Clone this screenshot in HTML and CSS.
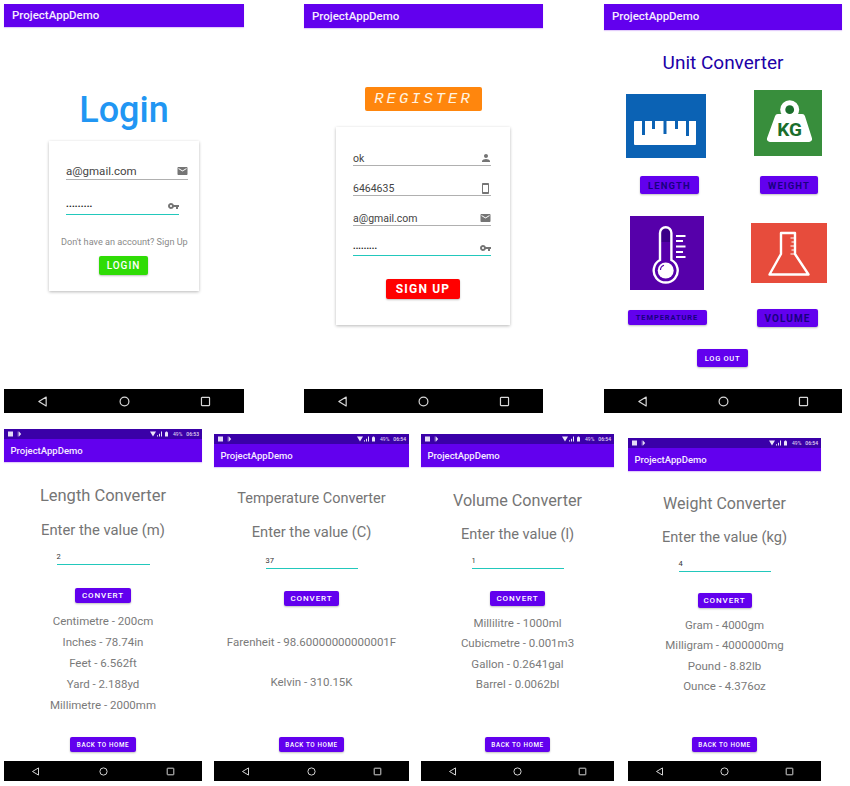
FILE: index.html
```html
<!DOCTYPE html>
<html lang="en">
<head>
    <meta charset="UTF-8">
    <meta name="viewport" content="width=device-width, initial-scale=1.0">
    <title>ProjectAppDemo screens</title>
    <link rel="stylesheet" href="styles.css">
</head>
<body>
    <svg class="sprite" aria-hidden="true">
        <symbol id="i-mail" viewBox="2 4 20 16"><path d="M20 4H4c-1.1 0-2 .9-2 2v12c0 1.1.9 2 2 2h16c1.1 0 2-.9 2-2V6c0-1.1-.9-2-2-2zm0 4l-8 5-8-5V6l8 5 8-5v2z"/></symbol>
        <symbol id="i-key" viewBox="1 6 22 12"><path d="M12.65 10C11.83 7.67 9.61 6 7 6c-3.31 0-6 2.69-6 6s2.69 6 6 6c2.61 0 4.83-1.67 5.65-4H17v4h4v-4h2v-4H12.65zM7 14c-1.1 0-2-.9-2-2s.9-2 2-2 2 .9 2 2-.9 2-2 2z"/></symbol>
        <symbol id="i-person" viewBox="4 4 16 16"><path d="M12 12c2.21 0 4-1.79 4-4s-1.79-4-4-4-4 1.79-4 4 1.79 4 4 4zm0 2c-2.67 0-8 1.34-8 4v2h16v-2c0-2.66-5.33-4-8-4z"/></symbol>
        <symbol id="i-phone" viewBox="5 1 14 22"><path d="M17 1.01L7 1c-1.1 0-2 .9-2 2v18c0 1.1.9 2 2 2h10c1.1 0 2-.9 2-2V3c0-1.1-.9-1.99-2-1.99zM17 19H7V5h10v14z"/></symbol>
        <symbol id="i-back" viewBox="0 0 12 12"><path d="M10 1.2v9.6L2 6z" fill="none" stroke="currentColor" stroke-width="1.3" stroke-linejoin="round"/></symbol>
        <symbol id="i-home" viewBox="0 0 12 12"><circle cx="6" cy="6" r="4.8" fill="none" stroke="currentColor" stroke-width="1.3"/></symbol>
        <symbol id="i-recent" viewBox="0 0 12 12"><rect x="1.6" y="1.6" width="8.8" height="8.8" rx="0.6" fill="none" stroke="currentColor" stroke-width="1.3"/></symbol>
        <symbol id="i-status-left" viewBox="0 0 16 6"><path d="M0 .5h5v5H0zM11 .5v5l2.2-2.5zM9.8.5h.7v5h-.7z"/></symbol>
        <symbol id="i-status-right" viewBox="0 0 20 6"><path d="M0 .5h6L3 5.500zM7 5.500h1V4.200H7zM9 5.500h1V2.800H9zM11 5.500h1V.5h-1zM15 1.200h.8V.5h1.400v.7h.8v4.300h-3z"/></symbol>
    </svg>

    <div class="row row-top">
        <!-- Login -->
        <div class="phone phone-login">
            <div class="app-bar">ProjectAppDemo</div>
            <div class="body body-center">
                <h1 class="login-title">Login</h1>
                <div class="card card-login">
                    <div class="field field-long">
                        <span>a@gmail.com</span>
                        <svg class="ic ic-mail"><use href="#i-mail"></use></svg>
                    </div>
                    <div class="field field-focus field-pass">
                        <span class="dots">•••••••••</span>
                        <svg class="ic ic-key"><use href="#i-key"></use></svg>
                    </div>
                    <p class="login-hint">Don't have an account? Sign Up</p>
                    <button class="btn btn-login">LOGIN</button>
                </div>
            </div>
            <div class="nav nav-large">
                <svg class="nav-ic"><use href="#i-back"></use></svg>
                <svg class="nav-ic"><use href="#i-home"></use></svg>
                <svg class="nav-ic"><use href="#i-recent"></use></svg>
            </div>
        </div>

        <!-- Register -->
        <div class="phone phone-register">
            <div class="app-bar app-bar-24">ProjectAppDemo</div>
            <div class="body body-center">
                <div class="register-badge">REGISTER</div>
                <div class="card card-register">
                    <div class="field">
                        <span>ok</span>
                        <svg class="ic ic-person"><use href="#i-person"></use></svg>
                    </div>
                    <div class="field">
                        <span>6464635</span>
                        <svg class="ic ic-phone"><use href="#i-phone"></use></svg>
                    </div>
                    <div class="field">
                        <span>a@gmail.com</span>
                        <svg class="ic ic-mail"><use href="#i-mail"></use></svg>
                    </div>
                    <div class="field field-focus">
                        <span class="dots dots-small">•••••••••</span>
                        <svg class="ic ic-key"><use href="#i-key"></use></svg>
                    </div>
                    <button class="btn btn-signup">SIGN UP</button>
                </div>
            </div>
            <div class="nav nav-large">
                <svg class="nav-ic"><use href="#i-back"></use></svg>
                <svg class="nav-ic"><use href="#i-home"></use></svg>
                <svg class="nav-ic"><use href="#i-recent"></use></svg>
            </div>
        </div>

        <!-- Home -->
        <div class="phone phone-home">
            <div class="app-bar app-bar-home">ProjectAppDemo</div>
            <div class="body body-center">
                <h2 class="home-title">Unit Converter</h2>
                <div class="tiles">
                    <div class="tile">
                        <div class="tile-art tile-art-top tile-end">
                            <svg class="art-length" viewBox="0 0 80 64">
                                <rect width="80" height="64" fill="#0b62b4"/>
                                <path d="M9 27h61v23a1 1 0 0 1-1 1H9a1 1 0 0 1-1-1V28a1 1 0 0 1 1-1z" fill="#fff"/>
                                <path d="M16 27h3v14h-3zM26 27h3v8h-3zM37.500 27h3v13h-3zM49 27h3v8h-3zM60 27h3v15h-3z" fill="#0b62b4"/>
                            </svg>
                        </div>
                        <button class="btn btn-unit btn-length">LENGTH</button>
                    </div>
                    <div class="tile">
                        <div class="tile-art tile-art-top tile-start">
                            <svg class="art-weight" viewBox="0 0 68 66">
                                <rect width="68" height="66" fill="#388e3c"/>
                                <circle cx="35.700" cy="19.700" r="9.500" fill="#fff"/>
                                <path d="M24 24h24a3 3 0 0 1 3 2.200l7 22a3 3 0 0 1-3 3.800H16a3 3 0 0 1-3-3.800l8-22a3 3 0 0 1 3-2.200z" fill="#fff"/>
                                <circle cx="35.700" cy="19.700" r="4.400" fill="#1b6e2c"/>
                                <text class="kg" x="35.700" y="46" text-anchor="middle">KG</text>
                            </svg>
                        </div>
                        <button class="btn btn-unit btn-weight">WEIGHT</button>
                    </div>
                    <div class="tile">
                        <div class="tile-art tile-art-bottom">
                            <svg class="art-temp" viewBox="0 0 74 74">
                                <rect width="74" height="74" fill="#5600aa"/>
                                <path d="M31 16v10h9.500V16a4.750 4.750 0 0 0-9.500 0z" fill="#3b0088"/>
                                <path d="M30 44V17a5.700 5.700 0 0 1 11.400 0v27a12 12 0 1 1-11.400 0z" fill="none" stroke="#fff" stroke-width="2.400"/>
                                <circle cx="35.700" cy="54.500" r="8" fill="#fff"/>
                                <path d="M30.500 54a5 5 0 0 1 3.500-4.800" fill="none" stroke="#5600aa" stroke-width="1.200"/>
                                <path d="M46 20h9.500M46 25h7M46 30.500h9.500M46 36h7M46 41h9.500" stroke="#fff" stroke-width="2"/>
                            </svg>
                        </div>
                        <button class="btn btn-unit btn-temp">TEMPERATURE</button>
                    </div>
                    <div class="tile">
                        <div class="tile-art tile-art-bottom">
                            <svg class="art-volume" viewBox="0 0 76 60">
                                <rect width="76" height="60" fill="#e74c3c"/>
                                <path d="M30 10h14v21l13.500 20.500h-39L30 31z" fill="none" stroke="#fff" stroke-width="2.400" stroke-linejoin="round"/>
                                <path d="M39.500 15h4.500M40.500 19h3.500M39.500 23h4.500M40.500 27h3.500M39.500 31h4.500" stroke="#fff" stroke-width="1"/>
                            </svg>
                        </div>
                        <button class="btn btn-unit btn-volume">VOLUME</button>
                    </div>
                </div>
                <button class="btn btn-logout">LOG OUT</button>
            </div>
            <div class="nav nav-large">
                <svg class="nav-ic"><use href="#i-back"></use></svg>
                <svg class="nav-ic"><use href="#i-home"></use></svg>
                <svg class="nav-ic"><use href="#i-recent"></use></svg>
            </div>
        </div>
    </div>

    <div class="row row-bottom">
        <!-- Length -->
        <div class="phone conv conv-length">
            <div class="status">
                <svg class="status-left"><use href="#i-status-left"></use></svg>
                <svg class="status-right"><use href="#i-status-right"></use></svg>
                <span class="status-text">49%</span>
                <span class="status-text status-time">06:53</span>
            </div>
            <div class="app-bar app-bar-small">ProjectAppDemo</div>
            <div class="body body-center">
                <h2 class="conv-title">Length Converter</h2>
                <div class="conv-label">Enter the value (m)</div>
                <div class="conv-input">2</div>
                <button class="btn btn-convert">CONVERT</button>
                <div class="results">
                    <p>Centimetre - 200cm</p>
                    <p>Inches - 78.74in</p>
                    <p>Feet - 6.562ft</p>
                    <p>Yard - 2.188yd</p>
                    <p>Millimetre - 2000mm</p>
                </div>
                <button class="btn btn-back">BACK TO HOME</button>
            </div>
            <div class="nav">
                <svg class="nav-ic"><use href="#i-back"></use></svg>
                <svg class="nav-ic"><use href="#i-home"></use></svg>
                <svg class="nav-ic"><use href="#i-recent"></use></svg>
            </div>
        </div>

        <!-- Temperature -->
        <div class="phone conv conv-temp">
            <div class="status">
                <svg class="status-left"><use href="#i-status-left"></use></svg>
                <svg class="status-right"><use href="#i-status-right"></use></svg>
                <span class="status-text">49%</span>
                <span class="status-text status-time">06:54</span>
            </div>
            <div class="app-bar app-bar-small">ProjectAppDemo</div>
            <div class="body body-center">
                <h2 class="conv-title">Temperature Converter</h2>
                <div class="conv-label">Enter the value (C)</div>
                <div class="conv-input">37</div>
                <button class="btn btn-convert">CONVERT</button>
                <div class="results">
                    <p>Farenheit - 98.60000000000001F</p>
                    <p>Kelvin - 310.15K</p>
                </div>
                <button class="btn btn-back">BACK TO HOME</button>
            </div>
            <div class="nav">
                <svg class="nav-ic"><use href="#i-back"></use></svg>
                <svg class="nav-ic"><use href="#i-home"></use></svg>
                <svg class="nav-ic"><use href="#i-recent"></use></svg>
            </div>
        </div>

        <!-- Volume -->
        <div class="phone conv conv-volume">
            <div class="status">
                <svg class="status-left"><use href="#i-status-left"></use></svg>
                <svg class="status-right"><use href="#i-status-right"></use></svg>
                <span class="status-text">49%</span>
                <span class="status-text status-time">06:54</span>
            </div>
            <div class="app-bar app-bar-small">ProjectAppDemo</div>
            <div class="body body-center">
                <h2 class="conv-title">Volume Converter</h2>
                <div class="conv-label">Enter the value (l)</div>
                <div class="conv-input">1</div>
                <button class="btn btn-convert">CONVERT</button>
                <div class="results">
                    <p>Millilitre - 1000ml</p>
                    <p>Cubicmetre - 0.001m3</p>
                    <p>Gallon - 0.2641gal</p>
                    <p>Barrel - 0.0062bl</p>
                </div>
                <button class="btn btn-back">BACK TO HOME</button>
            </div>
            <div class="nav">
                <svg class="nav-ic"><use href="#i-back"></use></svg>
                <svg class="nav-ic"><use href="#i-home"></use></svg>
                <svg class="nav-ic"><use href="#i-recent"></use></svg>
            </div>
        </div>

        <!-- Weight -->
        <div class="phone conv conv-weight">
            <div class="status">
                <svg class="status-left"><use href="#i-status-left"></use></svg>
                <svg class="status-right"><use href="#i-status-right"></use></svg>
                <span class="status-text">49%</span>
                <span class="status-text status-time">06:54</span>
            </div>
            <div class="app-bar app-bar-small">ProjectAppDemo</div>
            <div class="body body-center">
                <h2 class="conv-title">Weight Converter</h2>
                <div class="conv-label">Enter the value (kg)</div>
                <div class="conv-input">4</div>
                <button class="btn btn-convert">CONVERT</button>
                <div class="results">
                    <p>Gram - 4000gm</p>
                    <p>Milligram - 4000000mg</p>
                    <p>Pound - 8.82lb</p>
                    <p>Ounce - 4.376oz</p>
                </div>
                <button class="btn btn-back">BACK TO HOME</button>
            </div>
            <div class="nav">
                <svg class="nav-ic"><use href="#i-back"></use></svg>
                <svg class="nav-ic"><use href="#i-home"></use></svg>
                <svg class="nav-ic"><use href="#i-recent"></use></svg>
            </div>
        </div>
    </div>
</body>
</html>
```

FILE: styles.css
```css
* {
    box-sizing: border-box;
}

body {
    margin: 0;
    padding: 4px 0 0 4px;
    background: #fff;
    font-family: Roboto, "Liberation Sans", sans-serif;
    display: flex;
    flex-direction: column;
    gap: 16px;
}

h1, h2, p {
    margin: 0;
    font-weight: 400;
}

.sprite {
    display: none;
}

/* Rows of screenshots */
.row {
    display: flex;
}

.row-top {
    height: 409px;
}

.row-bottom {
    height: 352px;
    align-items: flex-end;
}

.phone {
    display: flex;
    flex-direction: column;
    background: #fff;
}

.phone-login {
    width: 240px;
    margin-right: 60px;
    height: 409px;
}

.phone-register {
    width: 239px;
    margin-right: 61px;
    height: 409px;
}

.phone-home {
    width: 238px;
    height: 409px;
}

.conv-length {
    width: 198px;
    height: 352px;
    margin-right: 12px;
}

.conv-temp {
    width: 195px;
    height: 347px;
    margin-right: 12px;
}

.conv-volume {
    width: 193px;
    height: 347px;
    margin-right: 14px;
}

.conv-weight {
    width: 193px;
    height: 343px;
}

/* Bars */
.app-bar {
    flex: none;
    height: 23px;
    padding-left: 8px;
    background: #6200ee;
    color: #f6ecff;
    font-size: 11.500px;
    font-weight: 500;
    line-height: 23px;
    box-shadow: 0 1px 1px #e3cdfb;
}

.app-bar-24 {
    height: 24px;
    line-height: 24px;
}

.app-bar-home {
    height: 25.500px;
    line-height: 25px;
}

.app-bar-small {
    height: 23px;
    padding-left: 6.500px;
    font-size: 9.500px;
    font-weight: 500;
    line-height: 23px;
}

.status {
    flex: none;
    height: 10px;
    background: #3a00a8;
    color: #e4dbf6;
    display: flex;
    align-items: center;
    padding: 0 3px 0 4px;
}

.status-left {
    width: 16px;
    height: 6px;
    fill: #e4dbf6;
    margin-right: auto;
}

.status-right {
    width: 20px;
    height: 6px;
    fill: #ece6fa;
    margin-right: 3px;
}

.status-text {
    font-size: 5px;
}

.status-time {
    margin-left: 4px;
    font-weight: 500;
}

.nav {
    flex: none;
    height: 20px;
    background: #000;
    color: #d8d8d8;
    display: flex;
    align-items: center;
    justify-content: space-between;
    padding: 0 27px;
}

.nav-large {
    height: 24px;
    padding: 0 33px;
}

.nav-ic {
    width: 9px;
    height: 9px;
}

.nav-large .nav-ic {
    width: 11px;
    height: 11px;
}

.body {
    flex: 1;
    min-height: 0;
}

.body-center {
    display: flex;
    flex-direction: column;
    align-items: center;
}

/* Buttons */
.btn {
    display: block;
    border: 0;
    padding: 0;
    border-radius: 2px;
    background: #6200ee;
    color: #fff;
    font-family: inherit;
    font-weight: 500;
    box-shadow: 0 1px 2px rgba(0, 0, 0, 0.25);
}

/* Cards and fields */
.card {
    background: #fff;
    box-shadow: 0 1px 3px rgba(0, 0, 0, 0.28);
    display: flex;
    flex-direction: column;
}

.field {
    display: flex;
    align-items: center;
    justify-content: space-between;
    height: 15px;
    border-bottom: 1px solid #b0b0b0;
    color: #444;
    font-size: 10.500px;
}

.field-focus {
    border-bottom-color: #22c8bc;
}

.ic {
    fill: #757575;
    flex: none;
}

.ic-mail {
    width: 11px;
    height: 8px;
}

.ic-key {
    width: 11px;
    height: 6px;
}

.ic-person {
    width: 8px;
    height: 8px;
    margin-right: 1px;
}

.ic-phone {
    width: 7px;
    height: 11px;
    margin-right: 2px;
}

.dots {
    color: #222;
    font-size: 8px;
    letter-spacing: 0.250px;
}

.dots-small {
    font-size: 7.500px;
    letter-spacing: 0.150px;
}

/* Login */
.login-title {
    margin-top: 63px;
    color: #2196f3;
    font-size: 36px;
    font-weight: 500;
    line-height: 40px;
}

.card-login {
    width: 150px;
    height: 150px;
    margin-top: 11px;
    padding: 24px 11px 0 17px;
}

.card-login .field {
    font-size: 11.500px;
    padding-bottom: 2px;
}

.field-pass {
    width: 113px;
    margin-top: 20px;
}

.login-hint {
    margin: 20px 0 0 -5px;
    color: #8a8a8a;
    font-size: 9.150px;
    line-height: 14px;
    white-space: nowrap;
}

.btn-login {
    width: 49px;
    height: 19px;
    margin: 7px 0 0 33px;
    background: #2fdc05;
    font-size: 10px;
    letter-spacing: 1px;
}

/* Register */
.register-badge {
    width: 117px;
    height: 24px;
    margin-top: 59px;
    border-radius: 2px;
    background: #ff860d;
    color: #fff3e0;
    font-family: "Liberation Mono", monospace;
    font-size: 15.500px;
    font-style: italic;
    letter-spacing: 3px;
    line-height: 24px;
    text-align: center;
}

.card-register {
    width: 174px;
    height: 198px;
    margin: 16px 0 0 -1px;
    padding: 24px 19px 0 17px;
    gap: 15px;
}

.btn-signup {
    width: 74px;
    height: 20px;
    margin: 8px 0 0 33px;
    background: #ff0000;
    font-size: 12px;
    font-weight: 700;
    letter-spacing: 1.200px;
}

/* Home */
.home-title {
    margin-top: 21.500px;
    color: #2000a8;
    font-size: 19px;
    line-height: 24px;
}

.tiles {
    display: grid;
    grid-template-columns: 100px 100px;
    column-gap: 22px;
    margin-top: 15px;
    align-self: flex-start;
    margin-left: 13px;
}

.tile {
    display: flex;
    flex-direction: column;
    align-items: center;
}

.tile-art {
    display: flex;
    align-items: center;
    justify-content: center;
}

.tile-art-top {
    height: 68px;
}

.tile-art-bottom {
    height: 74px;
    margin-top: 22px;
}

.tile-end {
    align-items: flex-end;
}

.tile-start {
    align-items: flex-start;
}

.tile-art svg {
    display: block;
}

.tile-art-top svg {
    margin-left: -2px;
}

.art-length {
    width: 80px;
    height: 64px;
}

.art-weight {
    width: 68px;
    height: 66px;
}

.art-temp {
    width: 74px;
    height: 74px;
}

.art-volume {
    width: 76px;
    height: 60px;
}

.kg {
    fill: #1b6e2c;
    font-family: Roboto, sans-serif;
    font-size: 19px;
    font-weight: 700;
}

.btn-unit {
    color: #180080;
    font-weight: 700;
    letter-spacing: 1.100px;
    font-size: 9.500px;
}

.btn-length {
    width: 59px;
    height: 18px;
    margin: 18px 0 0 5px;
}

.btn-weight {
    width: 58px;
    height: 18px;
    margin-top: 18px;
}

.btn-temp {
    width: 79px;
    height: 15px;
    margin-top: 20px;
    font-size: 7.500px;
    letter-spacing: 0.900px;
}

.btn-volume {
    width: 61px;
    height: 18px;
    margin: 19px 0 0 -3px;
    font-size: 10px;
}

.btn-logout {
    width: 51px;
    height: 18px;
    margin: 22px 0 0 -1px;
    font-size: 7.500px;
    letter-spacing: 0.700px;
}

/* Converter screens */
.conv .body {
    padding-bottom: 9px;
}

.conv-title {
    color: #757575;
    font-size: 16px;
    line-height: 20px;
    white-space: nowrap;
}

.conv-label {
    color: #757575;
    font-size: 14.600px;
    line-height: 20px;
    white-space: nowrap;
}

.conv-input {
    width: 92px;
    height: 15px;
    border-bottom: 1px solid #22c8bc;
    color: #333;
    font-size: 7.500px;
    line-height: 13px;
}

.btn-convert {
    width: 55px;
    height: 15px;
    font-size: 8px;
    letter-spacing: 0.900px;
}

.results {
    text-align: center;
    color: #7a7a7a;
    font-size: 11.500px;
    line-height: 21px;
    white-space: nowrap;
}

.btn-back {
    width: 65px;
    height: 15px;
    margin-top: auto;
    font-size: 6.300px;
    letter-spacing: 0.600px;
}

.conv-length .conv-title { margin-top: 24px; font-size: 16.500px; }
.conv-length .conv-label { margin-top: 14px; font-size: 14.800px; }
.conv-length .conv-input { margin-top: 10px; width: 93px; }
.conv-length .btn-convert { margin-top: 23px; width: 56px; }
.conv-length .results { margin-top: 7.500px; }
.conv-length .btn-back { width: 66px; }

.conv-temp .conv-title { margin-top: 22px; font-size: 14.500px; }
.conv-temp .conv-label { margin-top: 12.500px; font-size: 14.700px; }
.conv-temp .conv-input { margin-top: 12.500px; }
.conv-temp .btn-convert { margin-top: 22px; }
.conv-temp .results { margin-top: 25.500px; }
.conv-temp .results p + p { margin-top: 19px; }

.conv-volume .conv-title { margin-top: 23.500px; font-size: 16.200px; }
.conv-volume .conv-label { margin-top: 13px; }
.conv-volume .conv-input { margin-top: 10.500px; }
.conv-volume .btn-convert { margin-top: 22px; }
.conv-volume .results { margin-top: 6.500px; line-height: 20.500px; }

.conv-weight .conv-title { margin-top: 23px; }
.conv-weight .conv-label { margin-top: 12.500px; }
.conv-weight .conv-input { margin-top: 10px; }
.conv-weight .btn-convert { margin-top: 21.500px; width: 54px; }
.conv-weight .results { margin-top: 7px; line-height: 20.300px; }
```
